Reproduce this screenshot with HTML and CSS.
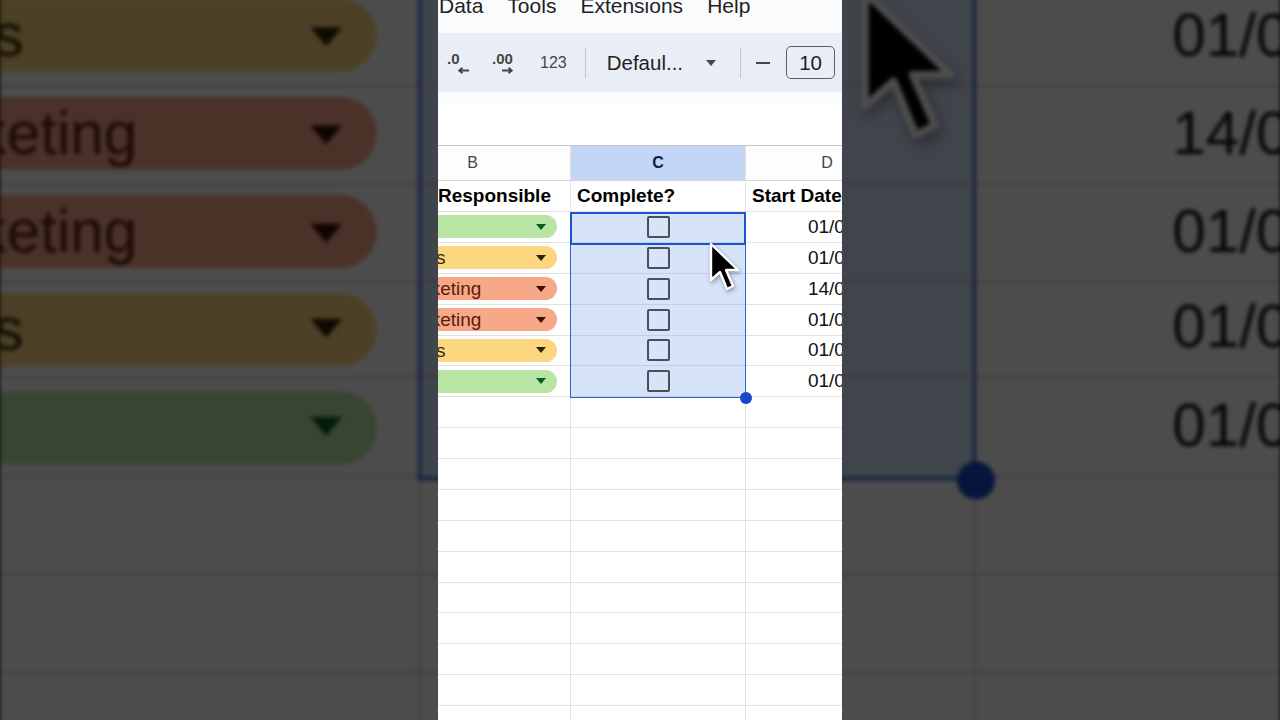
FILE: index.html
```html
<!DOCTYPE html>
<html lang="en">
<head>
<meta charset="utf-8">
<title>Sheets short</title>
<link rel="stylesheet" href="styles.css">
</head>
<body>
<div class="stage">
  <div class="bg" aria-hidden="true">
    <div class="frame">
      <div class="menubar"><span>Data</span><span>Tools</span><span>Extensions</span><span>Help</span></div>
      <div class="toolbar">
        <div class="deci dec"><span class="deci-txt">.0</span><svg class="deci-arrow" viewBox="0 0 13 7"><path d="M12 3.5H3M5.5 0.8L2.2 3.5L5.5 6.2" fill="none" stroke="#444746" stroke-width="1.8"/></svg></div>
        <div class="deci inc"><span class="deci-txt">.00</span><svg class="deci-arrow" viewBox="0 0 13 7"><path d="M1 3.5H10M7.5 0.8L10.8 3.5L7.5 6.2" fill="none" stroke="#444746" stroke-width="1.8"/></svg></div>
        <span class="num">123</span>
        <span class="sep"></span>
        <span class="font">Defaul...</span>
        <span class="tri"></span>
        <span class="sep sep2"></span>
        <span class="minus"></span>
        <span class="fsize">10</span>
      </div>
      <div class="gap-strip"></div>
      <div class="formula"></div>
      <div class="sheet">
        <div class="row colhead"><div class="cell b">B</div><div class="cell c">C</div><div class="cell d">D</div><div class="cell e"></div></div>
        <div class="row hdr"><div class="cell b"><span class="resp">Responsible</span></div><div class="cell c">Complete?</div><div class="cell d">Start Date</div><div class="cell e"></div></div>
        <div class="row data"><div class="cell b"><span class="pill green"><span class="pt">IT</span><span class="arr"></span></span></div><div class="cell c sel"><span class="box"></span></div><div class="cell d date">01/03/2024</div><div class="cell e"></div></div>
        <div class="row data"><div class="cell b"><span class="pill yellow"><span class="pt">Sales</span><span class="arr"></span></span></div><div class="cell c sel"><span class="box"></span></div><div class="cell d date">01/03/2024</div><div class="cell e"></div></div>
        <div class="row data"><div class="cell b"><span class="pill salmon"><span class="pt">Marketing</span><span class="arr"></span></span></div><div class="cell c sel"><span class="box"></span></div><div class="cell d date">14/03/2024</div><div class="cell e"></div></div>
        <div class="row data"><div class="cell b"><span class="pill salmon"><span class="pt">Marketing</span><span class="arr"></span></span></div><div class="cell c sel"><span class="box"></span></div><div class="cell d date">01/04/2024</div><div class="cell e"></div></div>
        <div class="row data"><div class="cell b"><span class="pill yellow"><span class="pt">Sales</span><span class="arr"></span></span></div><div class="cell c sel"><span class="box"></span></div><div class="cell d date">01/05/2024</div><div class="cell e"></div></div>
        <div class="row data"><div class="cell b"><span class="pill green"><span class="pt">IT</span><span class="arr"></span></span></div><div class="cell c sel"><span class="box"></span></div><div class="cell d date">01/06/2024</div><div class="cell e"></div></div>
        <div class="row data"><div class="cell b"></div><div class="cell c"></div><div class="cell d"></div><div class="cell e"></div></div>
        <div class="row data"><div class="cell b"></div><div class="cell c"></div><div class="cell d"></div><div class="cell e"></div></div>
        <div class="row data"><div class="cell b"></div><div class="cell c"></div><div class="cell d"></div><div class="cell e"></div></div>
        <div class="row data"><div class="cell b"></div><div class="cell c"></div><div class="cell d"></div><div class="cell e"></div></div>
        <div class="row data"><div class="cell b"></div><div class="cell c"></div><div class="cell d"></div><div class="cell e"></div></div>
        <div class="row data"><div class="cell b"></div><div class="cell c"></div><div class="cell d"></div><div class="cell e"></div></div>
        <div class="row data"><div class="cell b"></div><div class="cell c"></div><div class="cell d"></div><div class="cell e"></div></div>
        <div class="row data"><div class="cell b"></div><div class="cell c"></div><div class="cell d"></div><div class="cell e"></div></div>
        <div class="row data"><div class="cell b"></div><div class="cell c"></div><div class="cell d"></div><div class="cell e"></div></div>
        <div class="row data"><div class="cell b"></div><div class="cell c"></div><div class="cell d"></div><div class="cell e"></div></div>
        <div class="row data"><div class="cell b"></div><div class="cell c"></div><div class="cell d"></div><div class="cell e"></div></div>
        <div class="range"><div class="active"></div><div class="handle"></div></div>
      </div>
      <svg class="cursor" viewBox="0 0 18 28"><path d="M2 2.5V20.5L6.5 16.5L10 25L13 23.5L9.5 15.5H15.5Z" fill="#000" stroke="#fff" stroke-width="1.2" stroke-linejoin="round"/></svg>
    </div>
  </div>

  <div class="frame main">
    <div class="menubar"><span>Data</span><span>Tools</span><span>Extensions</span><span>Help</span></div>
    <div class="toolbar">
      <div class="deci dec"><span class="deci-txt">.0</span><svg class="deci-arrow" viewBox="0 0 13 7"><path d="M12 3.5H3M5.5 0.8L2.2 3.5L5.5 6.2" fill="none" stroke="#444746" stroke-width="1.8"/></svg></div>
      <div class="deci inc"><span class="deci-txt">.00</span><svg class="deci-arrow" viewBox="0 0 13 7"><path d="M1 3.5H10M7.5 0.8L10.8 3.5L7.5 6.2" fill="none" stroke="#444746" stroke-width="1.8"/></svg></div>
      <span class="num">123</span>
      <span class="sep"></span>
      <span class="font">Defaul...</span>
      <span class="tri"></span>
      <span class="sep sep2"></span>
      <span class="minus"></span>
      <span class="fsize">10</span>
    </div>
    <div class="gap-strip"></div>
    <div class="formula"></div>
    <div class="sheet">
      <div class="row colhead"><div class="cell b">B</div><div class="cell c">C</div><div class="cell d">D</div><div class="cell e"></div></div>
      <div class="row hdr"><div class="cell b"><span class="resp">Responsible</span></div><div class="cell c">Complete?</div><div class="cell d">Start Date</div><div class="cell e"></div></div>
      <div class="row data"><div class="cell b"><span class="pill green"><span class="pt">IT</span><span class="arr"></span></span></div><div class="cell c sel"><span class="box"></span></div><div class="cell d date">01/03/2024</div><div class="cell e"></div></div>
      <div class="row data"><div class="cell b"><span class="pill yellow"><span class="pt">Sales</span><span class="arr"></span></span></div><div class="cell c sel"><span class="box"></span></div><div class="cell d date">01/03/2024</div><div class="cell e"></div></div>
      <div class="row data"><div class="cell b"><span class="pill salmon"><span class="pt">Marketing</span><span class="arr"></span></span></div><div class="cell c sel"><span class="box"></span></div><div class="cell d date">14/03/2024</div><div class="cell e"></div></div>
      <div class="row data"><div class="cell b"><span class="pill salmon"><span class="pt">Marketing</span><span class="arr"></span></span></div><div class="cell c sel"><span class="box"></span></div><div class="cell d date">01/04/2024</div><div class="cell e"></div></div>
      <div class="row data"><div class="cell b"><span class="pill yellow"><span class="pt">Sales</span><span class="arr"></span></span></div><div class="cell c sel"><span class="box"></span></div><div class="cell d date">01/05/2024</div><div class="cell e"></div></div>
      <div class="row data"><div class="cell b"><span class="pill green"><span class="pt">IT</span><span class="arr"></span></span></div><div class="cell c sel"><span class="box"></span></div><div class="cell d date">01/06/2024</div><div class="cell e"></div></div>
      <div class="row data"><div class="cell b"></div><div class="cell c"></div><div class="cell d"></div><div class="cell e"></div></div>
      <div class="row data"><div class="cell b"></div><div class="cell c"></div><div class="cell d"></div><div class="cell e"></div></div>
      <div class="row data"><div class="cell b"></div><div class="cell c"></div><div class="cell d"></div><div class="cell e"></div></div>
      <div class="row data"><div class="cell b"></div><div class="cell c"></div><div class="cell d"></div><div class="cell e"></div></div>
      <div class="row data"><div class="cell b"></div><div class="cell c"></div><div class="cell d"></div><div class="cell e"></div></div>
      <div class="row data"><div class="cell b"></div><div class="cell c"></div><div class="cell d"></div><div class="cell e"></div></div>
      <div class="row data"><div class="cell b"></div><div class="cell c"></div><div class="cell d"></div><div class="cell e"></div></div>
      <div class="row data"><div class="cell b"></div><div class="cell c"></div><div class="cell d"></div><div class="cell e"></div></div>
      <div class="row data"><div class="cell b"></div><div class="cell c"></div><div class="cell d"></div><div class="cell e"></div></div>
      <div class="row data"><div class="cell b"></div><div class="cell c"></div><div class="cell d"></div><div class="cell e"></div></div>
      <div class="row data"><div class="cell b"></div><div class="cell c"></div><div class="cell d"></div><div class="cell e"></div></div>
      <div class="range"><div class="active"></div><div class="handle"></div></div>
    </div>
    <svg class="cursor" viewBox="0 0 18 28"><path d="M2 2.5V20.5L6.5 16.5L10 25L13 23.5L9.5 15.5H15.5Z" fill="#000" stroke="#fff" stroke-width="1.2" stroke-linejoin="round"/></svg>
  </div>
</div>
</body>
</html>
```
FILE: styles.css
```css
html, body {
  margin: 0;
  padding: 0;
  width: 1280px;
  height: 720px;
  overflow: hidden;
  background: #000;
}

.stage {
  position: relative;
  width: 1280px;
  height: 720px;
  overflow: hidden;
  display: flex;
  justify-content: center;
}

.bg {
  position: absolute;
  left: 438px;
  top: 0;
  width: 404px;
  height: 720px;
  transform: scale(3.17);
  transform-origin: 50% 50%;
  filter: blur(0.7px) brightness(0.3);
}

.frame {
  position: relative;
  width: 404px;
  height: 720px;
  overflow: hidden;
  background: #fff;
  font-family: "Liberation Sans", Arial, Helvetica, sans-serif;
  color: #1f1f1f;
}

.main {
  z-index: 1;
}

/* menu bar */
.menubar {
  height: 33px;
  background: #f9fbfd;
  display: flex;
  gap: 24px;
  padding-left: 1px;
  font-size: 21px;
  line-height: 21px;
  box-sizing: border-box;
}
.menubar span {
  margin-top: -5px;
}

/* toolbar */
.toolbar {
  height: 59px;
  background: #e9eef6;
  display: flex;
  align-items: center;
  padding-left: 9px;
  box-sizing: border-box;
  color: #444746;
}
.deci {
  display: flex;
  flex-direction: column;
  height: 24px;
  position: relative;
  box-sizing: border-box;
}
.deci-txt {
  font-size: 15px;
  line-height: 15px;
  font-weight: bold;
  color: #444746;
}
.deci-arrow {
  width: 13px;
  height: 7px;
  margin-top: 1px;
  align-self: flex-end;
}
.dec {
  width: 23px;
}
.inc {
  width: 24px;
  margin-left: 22px;
}
.inc .deci-arrow {
  margin-right: 2px;
}
.num {
  margin-left: 24px;
  font-size: 16px;
  color: #444746;
}
.sep {
  width: 1px;
  height: 30px;
  background: #c4c7c5;
  margin-left: 18px;
}
.font {
  margin-left: 21px;
  font-size: 20.5px;
  color: #1f1f1f;
}
.tri {
  margin-left: 23px;
  width: 0;
  height: 0;
  border-left: 5px solid transparent;
  border-right: 5px solid transparent;
  border-top: 6px solid #444746;
}
.sep2 {
  margin-left: 24px;
}
.minus {
  margin-left: 15px;
  width: 14px;
  height: 2px;
  background: #444746;
}
.fsize {
  margin-left: 16px;
  width: 49px;
  height: 33px;
  box-sizing: border-box;
  border: 1.5px solid #5b5e63;
  border-radius: 5px;
  display: flex;
  align-items: center;
  justify-content: center;
  font-size: 20.5px;
  color: #1f1f1f;
}

.gap-strip {
  height: 11px;
  background: #f9fbfd;
}
.formula {
  height: 42px;
  background: #fff;
}

/* sheet */
.sheet {
  position: relative;
  margin-left: -63px;
  border-top: 1px solid #c7c7c7;
  width: 730px;
}
.row {
  display: grid;
  grid-template-columns: 196px 175px 163px 196px;
}
.cell {
  box-sizing: border-box;
  border-right: 1px solid #e1e1e1;
  border-bottom: 1px solid #e1e1e1;
  display: flex;
  align-items: center;
  font-size: 19px;
  overflow: visible;
  white-space: nowrap;
}
.colhead .cell {
  height: 35px;
  justify-content: center;
  font-size: 16px;
  color: #444746;
  background: #fdfdfd;
  border-bottom-color: #d5d5d5;
}
.colhead .c {
  background: #c3d6f6;
  color: #0b1f4d;
  font-weight: bold;
}
.hdr .cell {
  height: 31px;
  font-weight: bold;
  color: #000;
  padding-left: 6px;
}
.hdr .b {
  padding-left: 63px;
}
.data .cell {
  height: 30.875px;
}
.sel {
  background: #d6e3f9;
  border-bottom-color: #c3cfe4;
  justify-content: center;
}
.date {
  justify-content: flex-end;
  padding-right: 5px;
  color: #111;
}

/* pills */
.pill {
  margin-left: auto;
  margin-right: 13px;
  width: 172px;
  height: 23px;
  border-radius: 12px;
  box-sizing: border-box;
  padding: 0 11px 0 13px;
  display: flex;
  align-items: center;
  justify-content: space-between;
}
.pt {
  font-size: 19px;
  line-height: 19px;
}
.arr {
  width: 0;
  height: 0;
  border-left: 5px solid transparent;
  border-right: 5px solid transparent;
  border-top: 6px solid #000;
}
.green {
  background: #b8e5a4;
}
.green .pt { color: #0d3d13; }
.green .arr { border-top-color: #0d5a1e; }
.yellow {
  background: #fcd77f;
}
.yellow .pt { color: #3b2a05; }
.yellow .arr { border-top-color: #2e2100; }
.salmon {
  background: #f6a889;
}
.salmon .pt { color: #5a1d0a; }
.salmon .arr { border-top-color: #3a0f00; }

/* checkbox */
.box {
  width: 23px;
  height: 22px;
  box-sizing: border-box;
  border: 2.5px solid #4a4f56;
  border-radius: 2px;
}

/* selection overlay */
.range {
  position: absolute;
  left: 195px;
  top: 66px;
  width: 176px;
  height: 186px;
  box-sizing: border-box;
  border: 1.5px solid #2b63d6;
  pointer-events: none;
}
.active {
  position: absolute;
  left: -1.5px;
  top: -1.5px;
  width: 176px;
  height: 33px;
  box-sizing: border-box;
  border: 2px solid #1a55cf;
}
.handle {
  position: absolute;
  right: -7px;
  bottom: -7px;
  width: 12px;
  height: 12px;
  border-radius: 50%;
  background: #1447c6;
}

/* mouse cursor */
.cursor {
  position: absolute;
  left: 269px;
  top: 239px;
  width: 36px;
  height: 56px;
  filter: drop-shadow(1px 2px 2px rgba(0,0,0,0.35));
}
```
